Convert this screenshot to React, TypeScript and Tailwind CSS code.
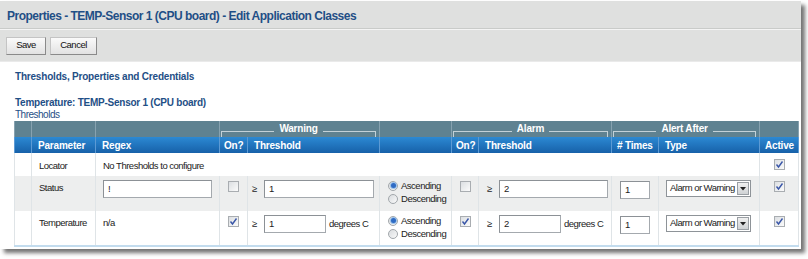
import React from "react";

const F = "font-['Liberation_Sans',Arial,sans-serif]";
const N = "text-[9.5px] tracking-[-0.5px]";

function Check({ checked }: { checked?: boolean }) {
  return (
    <span className="inline-flex h-[11px] w-[11px] items-center justify-center border border-[#a9adb1] bg-gradient-to-br from-[#dcdfe2] to-[#fbfbfb]">
      {checked ? (
        <svg width="9" height="9" viewBox="0 0 9 9">
          <path d="M1.5 4.5 L3.5 7 L7.5 1.5" stroke="#3a56a8" strokeWidth="1.4" fill="none" />
        </svg>
      ) : null}
    </span>
  );
}

function Radio({ on }: { on?: boolean }) {
  return (
    <span className="inline-flex h-[10px] w-[10px] shrink-0 items-center justify-center rounded-full border border-[#a2a7ab] bg-gradient-to-br from-[#d8dbde] to-[#fafafa]">
      {on ? <span className="h-[5px] w-[5px] rounded-full bg-[#2f6bc4] ring-1 ring-[#9cc2ea]" /> : null}
    </span>
  );
}

function Input({ w, v }: { w: number; v: string }) {
  return (
    <span
      className="inline-flex h-[18px] shrink-0 items-center border border-[#a4a9ae] border-t-[#8c9196] border-l-[#8c9196] bg-white pl-[4px] text-[#222]"
      style={{ width: w }}
    >
      {v}
    </span>
  );
}

function Select() {
  return (
    <span className="inline-flex h-[17px] w-[85px] items-center justify-between whitespace-nowrap border border-[#8e9398] bg-white pl-[3px] pr-[1px] tracking-[-0.55px] text-[#222]">
      <span>Alarm or Warning</span>
      <span className="inline-flex h-[13px] w-[12px] items-center justify-center border border-[#9a9fa4] bg-gradient-to-b from-[#f0f0f0] to-[#cfd2d4]">
        <svg width="6" height="4" viewBox="0 0 6 4">
          <path d="M0 0 L6 0 L3 3.5 Z" fill="#222" />
        </svg>
      </span>
    </span>
  );
}

function Group({ label, rightPad }: { label: string; rightPad: number }) {
  return (
    <div className="flex h-[16px] items-end pl-[1px]" style={{ paddingRight: rightPad }}>
      <div className="h-[6px] flex-1 border-l border-t border-[#c3d1d8]" />
      <span className="mb-[2px] px-[5px] leading-[12px]">{label}</span>
      <div className="h-[6px] flex-1 border-r border-t border-[#c3d1d8]" />
    </div>
  );
}

function Ge({ children }: { children: React.ReactNode }) {
  return (
    <div className="flex items-center whitespace-nowrap">
      <span className="mr-[4px] w-[8px]">≥</span>
      {children}
    </div>
  );
}

function Dir() {
  return (
    <div className="flex flex-col gap-[2px] pl-[8px] pt-[4px] leading-[11px]">
      <div className="flex items-center gap-[3px]">
        <Radio on />
        <span>Ascending</span>
      </div>
      <div className="flex items-center gap-[3px]">
        <Radio />
        <span>Descending</span>
      </div>
    </div>
  );
}

export default function App() {
  const hc = "border-x border-[#87a2b0] p-0";
  const h2 = "border-x border-[#5c9ad4] px-[6px] text-left";
  const td = "border-x border-[#dfe4e7] align-top p-0";
  const btn =
    "h-[18px] border border-[#8a8a8a] border-t-[#c4c4c4] border-l-[#c4c4c4] bg-gradient-to-b from-[#fafafa] to-[#e2e2e2] text-[#111]";
  return (
    <div className={`relative h-[259px] w-[808px] bg-white ${F}`}>
      <div className="mt-[1px] h-[248px] w-[801px] bg-white shadow-[4px_4px_4px_rgba(0,0,0,0.55)]">
        <div className="flex h-[28px] items-center border-b border-[#c9cbc9] bg-[#dfe0df] pl-[7px] pt-[3px] text-[12px] font-bold tracking-[-0.5px] text-[#1f4f86]">
          Properties - TEMP-Sensor 1 (CPU board) - Edit Application Classes
        </div>
        <div className={`flex h-[33px] items-center gap-[4px] border-t border-[#f4f4f4] border-b border-b-[#eaeaea] bg-[#dfe0df] pl-[6px] ${N}`}>
          <button className={`${btn} w-[40px]`}>Save</button>
          <button className={`${btn} w-[47px]`}>Cancel</button>
        </div>
        <div className="pl-[14px] pt-[9px] text-[#1f4f86]">
          <div className="pl-[1px] text-[10px] font-bold leading-[12px] tracking-[-0.2px]">Thresholds, Properties and Credentials</div>
          <div className="mt-[14px] pl-[1px] text-[10px] font-bold leading-[12px] tracking-[-0.25px]">Temperature: TEMP-Sensor 1 (CPU board)</div>
          <div className={`pl-[1px] leading-[11px] ${N} text-[10px]`}>Thresholds</div>
          <table className={`mt-[1px] w-[784px] table-fixed border-collapse border-b-2 border-b-[#c3dcee] text-[#222] ${N}`}>
            <colgroup>
              <col className="w-[17px]" />
              <col className="w-[64px]" />
              <col className="w-[124px]" />
              <col className="w-[28px]" />
              <col className="w-[132px]" />
              <col className="w-[72px]" />
              <col className="w-[27px]" />
              <col className="w-[133px]" />
              <col className="w-[47px]" />
              <col className="w-[101px]" />
              <col className="w-[39px]" />
            </colgroup>
            <thead className="text-[10px] tracking-[-0.2px]">
              <tr className="h-[16px] bg-[#5f8291] font-bold text-white">
                <th className={hc} />
                <th className={hc} />
                <th className={hc} />
                <th className={hc} colSpan={2}>
                  <Group label="Warning" rightPad={3} />
                </th>
                <th className={hc} />
                <th className={hc} colSpan={2}>
                  <Group label="Alarm" rightPad={3} />
                </th>
                <th className={hc} colSpan={2}>
                  <Group label="Alert After" rightPad={3} />
                </th>
                <th className={hc} />
              </tr>
              <tr className="h-[16px] bg-gradient-to-b from-[#2c89d3] to-[#1761a9] font-bold text-white">
                <th className={h2} />
                <th className={h2}>Parameter</th>
                <th className={h2}>Regex</th>
                <th className={`${h2} !px-[4px]`}>On?</th>
                <th className={h2}>Threshold</th>
                <th className={h2} />
                <th className={`${h2} !px-[4px]`}>On?</th>
                <th className={h2}>Threshold</th>
                <th className={`${h2} !px-[5px]`}>#&nbsp;Times</th>
                <th className={h2}>Type</th>
                <th className={`${h2} !px-[5px]`}>Active</th>
              </tr>
            </thead>
            <tbody>
              <tr className="h-[23px] bg-white">
                <td className={td} />
                <td className={td}>
                  <div className="pl-[7px] pt-[6px]">Locator</div>
                </td>
                <td className={`${td} whitespace-nowrap`} colSpan={8}>
                  <div className="pl-[7px] pt-[6px]">No Thresholds to configure</div>
                </td>
                <td className={td}>
                  <div className="flex justify-center pt-[6px]">
                    <Check checked />
                  </div>
                </td>
              </tr>
              <tr className="h-[35px] bg-[#edeeee]">
                <td className={td} />
                <td className={td}>
                  <div className="pl-[7px] pt-[5px]">Status</div>
                </td>
                <td className={td}>
                  <div className="pl-[7px] pt-[4px]">
                    <Input w={109} v="!" />
                  </div>
                </td>
                <td className={td}>
                  <div className="pl-[8px] pt-[5px]">
                    <Check />
                  </div>
                </td>
                <td className={td}>
                  <div className="pl-[4px] pt-[4px]">
                    <Ge>
                      <Input w={110} v="1" />
                    </Ge>
                  </div>
                </td>
                <td className={td}>
                  <Dir />
                </td>
                <td className={td}>
                  <div className="pl-[8px] pt-[5px]">
                    <Check />
                  </div>
                </td>
                <td className={td}>
                  <div className="pl-[8px] pt-[4px]">
                    <Ge>
                      <Input w={109} v="2" />
                    </Ge>
                  </div>
                </td>
                <td className={td}>
                  <div className="pl-[8px] pt-[5px]">
                    <Input w={30} v="1" />
                  </div>
                </td>
                <td className={td}>
                  <div className="pl-[7px] pt-[4px]">
                    <Select />
                  </div>
                </td>
                <td className={td}>
                  <div className="flex justify-center pt-[5px]">
                    <Check checked />
                  </div>
                </td>
              </tr>
              <tr className="h-[35px] bg-white">
                <td className={td} />
                <td className={td}>
                  <div className="pl-[7px] pt-[5px]">Temperature</div>
                </td>
                <td className={td}>
                  <div className="pl-[7px] pt-[5px]">n/a</div>
                </td>
                <td className={td}>
                  <div className="pl-[8px] pt-[5px]">
                    <Check checked />
                  </div>
                </td>
                <td className={td}>
                  <div className="pl-[4px] pt-[4px]">
                    <Ge>
                      <Input w={62} v="1" />
                      <span className="ml-[3px]">degrees C</span>
                    </Ge>
                  </div>
                </td>
                <td className={td}>
                  <Dir />
                </td>
                <td className={td}>
                  <div className="pl-[8px] pt-[5px]">
                    <Check checked />
                  </div>
                </td>
                <td className={td}>
                  <div className="pl-[8px] pt-[4px]">
                    <Ge>
                      <Input w={62} v="2" />
                      <span className="ml-[3px]">degrees C</span>
                    </Ge>
                  </div>
                </td>
                <td className={td}>
                  <div className="pl-[8px] pt-[5px]">
                    <Input w={30} v="1" />
                  </div>
                </td>
                <td className={td}>
                  <div className="pl-[7px] pt-[4px]">
                    <Select />
                  </div>
                </td>
                <td className={td}>
                  <div className="flex justify-center pt-[5px]">
                    <Check checked />
                  </div>
                </td>
              </tr>
            </tbody>
          </table>
        </div>
      </div>
    </div>
  );
}
